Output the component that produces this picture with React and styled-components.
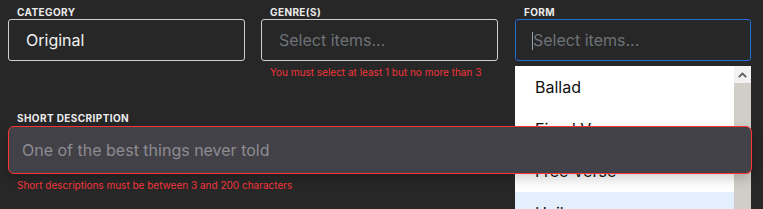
import React from 'react'
import styled, { createGlobalStyle } from 'styled-components'

const GlobalStyle = createGlobalStyle`
  * { box-sizing: border-box; }
  body {
    margin: 0;
    background: #272727;
    font-family: Inter, "Noto Sans", sans-serif;
  }
`

const formOptions = ['Ballad', 'Fixed Verse', 'Free Verse', 'Haiku']

const App = () => {
  return (
    <>
      <GlobalStyle />
      <Page>
        <Row>
          <Field>
            <Label>Category</Label>
            <Box>
              <Value>Original</Value>
            </Box>
          </Field>
          <Field>
            <Label>Genre(s)</Label>
            <Box>
              <Placeholder>Select items...</Placeholder>
            </Box>
            <ErrorText>You must select at least 1 but no more than 3</ErrorText>
          </Field>
          <Field $shift>
            <Label>Form</Label>
            <Anchor>
              <Box $focused>
                <Caret />
                <Placeholder>Select items...</Placeholder>
              </Box>
              <Menu>
                <List>
                  {formOptions.map((o, i) => (
                    <Option key={o} $active={i === 3}>{o}</Option>
                  ))}
                </List>
                <Scrollbar>
                  <ScrollArrow>
                    <svg width="9" height="6" viewBox="0 0 9 6">
                      <path d="M0.8 5.2 L4.5 1.5 L8.2 5.2" fill="none" stroke="#5f5f5f" strokeWidth="1.8" />
                    </svg>
                  </ScrollArrow>
                  <ScrollTrack />
                </Scrollbar>
              </Menu>
            </Anchor>
          </Field>
        </Row>
        <DescField>
          <Label $gap={2}>Short description</Label>
          <DescBox>
            <DescPlaceholder>One of the best things never told</DescPlaceholder>
          </DescBox>
          <ErrorText>Short descriptions must be between 3 and 200 characters</ErrorText>
        </DescField>
      </Page>
    </>
  )
}

const Page = styled.div`
  width: 763px;
  height: 209px;
  overflow: hidden;
  padding: 6px 11px 0 8px;
  background: #272727;
`
const Row = styled.div`
  display: grid;
  grid-template-columns: 237px 237px 237px;
  column-gap: 16px;
  height: 106px;
`
const Field = styled.div`
  display: flex;
  flex-direction: column;
  margin-left: ${p => (p.$shift ? '1px' : '0')};
`
const Label = styled.div`
  padding-left: 9px;
  margin-bottom: ${p => p.$gap || 1}px;
  font-size: 10px;
  line-height: 12px;
  font-weight: 700;
  letter-spacing: 0.4px;
  text-transform: uppercase;
  color: #ececec;
`
const Anchor = styled.div`
  position: relative;
  z-index: 1;
`
const Box = styled.div`
  position: relative;
  height: 42px;
  display: flex;
  align-items: center;
  padding-left: 17px;
  border: 1px solid ${p => (p.$focused ? '#1f6fd6' : '#cfcfcf')};
  border-radius: 3px;
`
const Value = styled.span`
  font-size: 16px;
  color: #f2f2f2;
`
const Placeholder = styled.span`
  font-size: 16px;
  color: #6d7277;
`
const Caret = styled.span`
  position: absolute;
  left: 16px;
  top: 12px;
  width: 1px;
  height: 18px;
  background: #9aa0a6;
`
const ErrorText = styled.div`
  margin-top: 5px;
  padding-left: 9px;
  font-size: 10px;
  line-height: 12px;
  color: #f0353a;
`
const Menu = styled.div`
  position: absolute;
  top: 47px;
  left: 0;
  right: 0;
  height: 160px;
  display: flex;
  background: #fff;
`
const List = styled.div`
  flex: 1;
  overflow: hidden;
`
const Option = styled.div`
  height: 42px;
  flex-shrink: 0;
  display: flex;
  align-items: center;
  padding-left: 20px;
  font-size: 16px;
  color: #111;
  background: ${p => (p.$active ? '#e3effd' : '#fff')};
`
const Scrollbar = styled.div`
  width: 17px;
  display: flex;
  flex-direction: column;
`
const ScrollArrow = styled.div`
  height: 17px;
  display: flex;
  align-items: center;
  justify-content: center;
  background: #f1f1f1;
`
const ScrollTrack = styled.div`
  flex: 1;
  background: #d1cec8;
`
const DescField = styled.div`
  position: relative;
  z-index: 2;
  display: flex;
  flex-direction: column;
  width: 744px;
`
const DescBox = styled.div`
  height: 48px;
  display: flex;
  align-items: center;
  padding-left: 13px;
  background: #424147;
  border: 1px solid #ff3434;
  border-radius: 6px;
  box-shadow: 0 5px 12px rgba(0, 0, 0, 0.18);
`
const DescPlaceholder = styled.span`
  font-size: 16px;
  color: #8d8c92;
`

export default App
